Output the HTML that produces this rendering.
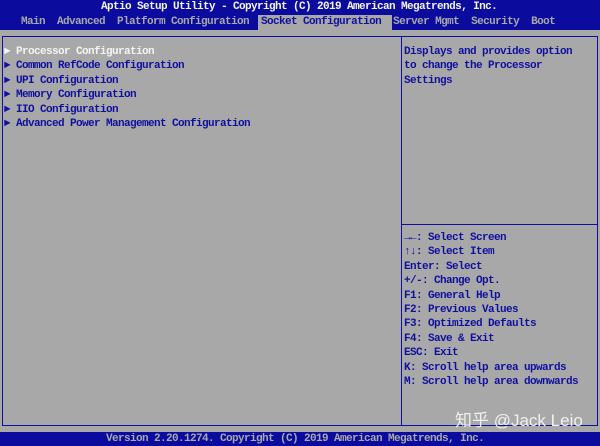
<!DOCTYPE html>
<html><head><style>
body{margin:0;width:600px;height:446px;background:#a8a8a8;position:relative;overflow:hidden;font-family:"Liberation Mono",monospace;font-size:11px;letter-spacing:-0.6px;}
.t{position:absolute;white-space:pre;line-height:14.4px;font-weight:bold;}
.bar{position:absolute;left:0;width:600px;background:#0b0b9e;}
.ln{position:absolute;background:#1010a0;}
.w{color:#f4f4f4}.b{color:#1010a0}.g{color:#a8a8a8}
</style></head><body>
<div class="bar" style="top:0;height:30px"></div>
<div style="position:absolute;left:258px;top:15px;width:134px;height:15px;background:#a8a8a8"></div>
<div class="t w" style="left:101px;top:0px">Aptio Setup Utility - Copyright (C) 2019 American Megatrends, Inc.</div>
<div class="t g" style="left:21px;top:15px">Main  Advanced  Platform Configuration  <span class="b">Socket Configuration</span>  Server Mgmt  Security  Boot</div>
<div class="ln" style="left:2px;top:36px;width:596px;height:1px"></div>
<div class="ln" style="left:2px;top:36px;width:1px;height:390px"></div>
<div class="ln" style="left:597px;top:36px;width:1px;height:390px"></div>
<div class="ln" style="left:2px;top:425px;width:596px;height:1px"></div>
<div class="ln" style="left:401px;top:36px;width:1px;height:390px"></div>
<div class="ln" style="left:401px;top:224px;width:197px;height:1px"></div>
<div class="t w" style="left:4px;top:45px">► Processor Configuration</div>
<div class="t b" style="left:4px;top:59.4px">► Common RefCode Configuration
► UPI Configuration
► Memory Configuration
► IIO Configuration
► Advanced Power Management Configuration</div>
<div class="t b" style="left:404px;top:45px">Displays and provides option
to change the Processor
Settings</div>
<div class="t b" style="left:404px;top:231px">→←: Select Screen
↑↓: Select Item
Enter: Select
+/-: Change Opt.
F1: General Help
F2: Previous Values
F3: Optimized Defaults
F4: Save &amp; Exit
ESC: Exit
K: Scroll help area upwards
M: Scroll help area downwards</div>
<div style="position:absolute;left:455px;top:406px;font-family:'Liberation Sans','Noto Sans CJK SC',sans-serif;font-size:17px;letter-spacing:0;color:#f0f0f0;white-space:pre">知乎 @Jack Leio</div>
<div class="bar" style="top:432px;height:14px"></div>
<div class="t g" style="left:106px;top:432px">Version 2.20.1274. Copyright (C) 2019 American Megatrends, Inc.</div>
</body></html>
